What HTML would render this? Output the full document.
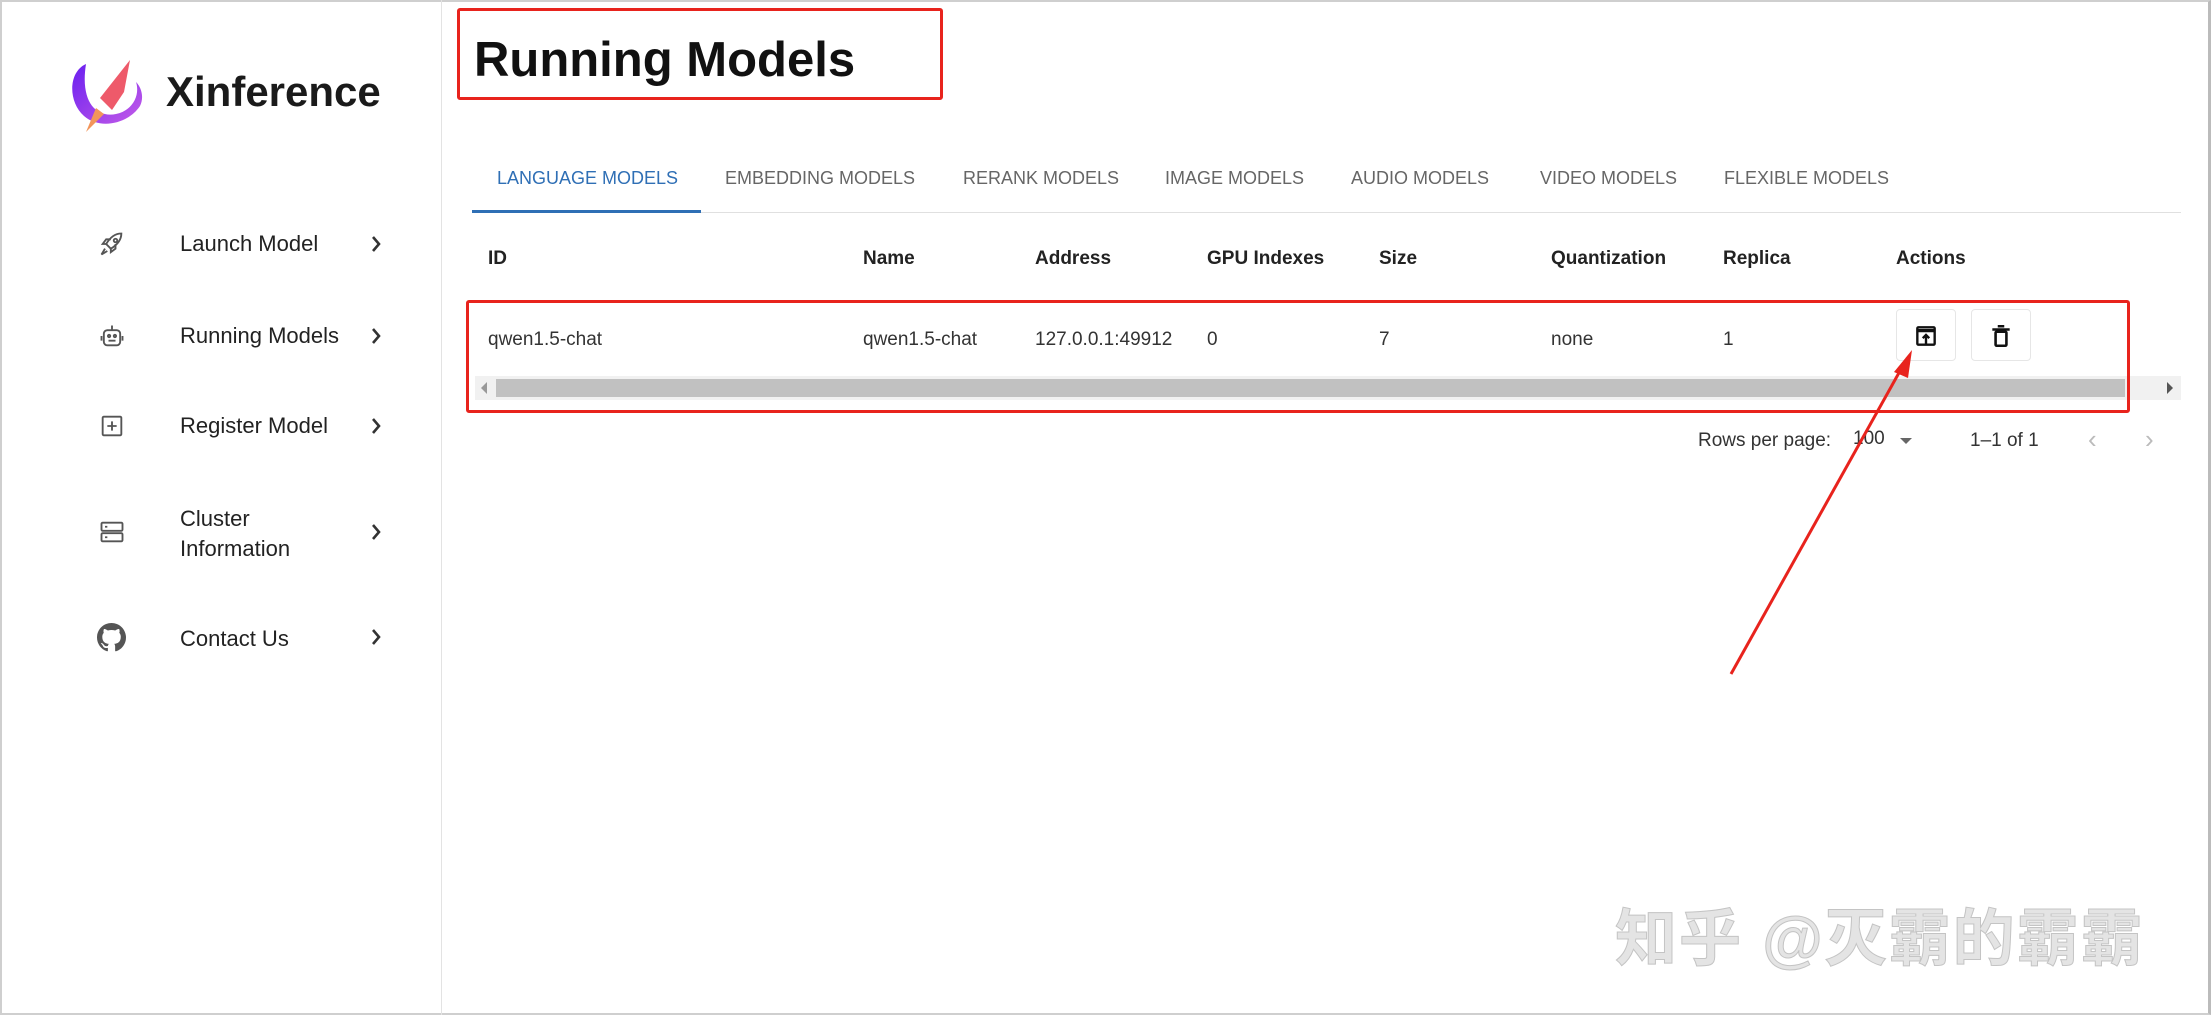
<!DOCTYPE html>
<html><head><meta charset="utf-8"><style>
*{margin:0;padding:0;box-sizing:border-box}
body{width:2211px;height:1015px;background:#fff;position:relative;overflow:hidden;font-family:"Liberation Sans","Noto Sans CJK SC",sans-serif;color:#222}
.a{position:absolute;white-space:nowrap}
.frame{position:absolute;left:0;top:0;width:2211px;height:1015px;border:2px solid #cfcfcf;border-right:3px solid #bbb}
.side{position:absolute;left:441px;top:0;width:1px;height:1015px;background:#e3e3e3}
.nav{font-size:22px;color:#222}
.tab{font-size:18px;color:#666;top:168px}
.th{font-size:19px;font-weight:bold;top:248px}
.td{font-size:19px;top:329px;color:#333}
.red{position:absolute;border:3px solid #e8231d;border-radius:3px}
.btn{position:absolute;top:309px;width:60px;height:52px;border:1px solid #e6e6e6;border-radius:4px;background:#fff}
</style></head><body>
<div class="frame"></div>
<div class="side"></div>

<svg class="a" style="left:66px;top:58px" width="84" height="74" viewBox="0 0 84 74">
<defs><linearGradient id="g" x1="0" y1="0" x2="1" y2="1"><stop offset="0" stop-color="#6a1ff0"/><stop offset="1" stop-color="#c45ce8"/></linearGradient></defs>
<path d="M20 6 C2 14 2 44 18 58 C34 72 62 66 74 48 C78 40 76 30 70 24 C74 36 68 52 50 56 C30 60 14 44 20 6 Z" fill="url(#g)"/>
<path d="M64 2 L58 34 L46 52 L34 40 Z" fill="#ee5a6a"/>
<path d="M30 50 L20 74 L38 56 Z" fill="#f2955a"/>
</svg>
<div class="a" style="left:166px;top:68px;font-size:42px;font-weight:bold;color:#1a1a1a">Xinference</div>

<svg class="a" style="left:98px;top:230px" width="28" height="28" viewBox="0 0 24 24" fill="none" stroke="#555" stroke-width="1.6"><path d="M20 3c-6 0-10 4-13 9l4 4c5-3 9-7 9-13z"/><circle cx="15" cy="9" r="1.5"/><path d="M7 12H4l3-4h4M11 16v3l4-3v-4M6 16l-3 5 5-3"/></svg>
<div class="a nav" style="left:180px;top:231px">Launch Model</div>

<svg class="a" style="left:98px;top:322px" width="28" height="28" viewBox="0 0 24 24" fill="none" stroke="#555" stroke-width="1.6"><rect x="5" y="7" width="14" height="13" rx="3"/><path d="M12 3v4M3 12v4M21 12v4"/><circle cx="9.5" cy="12" r="1"/><circle cx="14.5" cy="12" r="1"/><path d="M9 16h6"/></svg>
<div class="a nav" style="left:180px;top:323px">Running Models</div>

<svg class="a" style="left:98px;top:412px" width="28" height="28" viewBox="0 0 24 24" fill="none" stroke="#555" stroke-width="1.6"><rect x="4" y="4" width="16" height="16" rx="1"/><path d="M12 8v8M8 12h8"/></svg>
<div class="a nav" style="left:180px;top:413px">Register Model</div>

<svg class="a" style="left:98px;top:518px" width="28" height="28" viewBox="0 0 24 24" fill="none" stroke="#555" stroke-width="1.6"><rect x="3" y="4" width="18" height="7" rx="1"/><rect x="3" y="13" width="18" height="7" rx="1"/><path d="M6 7.5h2M6 16.5h2"/></svg>
<div class="a nav" style="left:180px;top:504px;line-height:30px">Cluster<br>Information</div>

<svg class="a" style="left:97px;top:623px" width="29" height="29" viewBox="0 0 16 16"><path fill="#555" d="M8 0C3.58 0 0 3.580 0 8c0 3.54 2.29 6.530 5.470 7.590.4.07.55-.17.55-.38 0-.19-.01-.82-.01-1.49-2.01.37-2.53-.49-2.69-.94-.09-.23-.48-.94-.82-1.13-.28-.15-.68-.52-.01-.53.63-.01 1.08.58 1.23.82.72 1.21 1.87.87 2.33.66.07-.52.28-.87.51-1.07-1.78-.2-3.64-.89-3.64-3.95 0-.87.31-1.59.82-2.15-.08-.2-.36-1.02.08-2.12 0 0 .67-.21 2.2.82.64-.18 1.32-.27 2-.27.68 0 1.36.09 2 .27 1.53-1.04 2.2-.82 2.2-.82.44 1.1.16 1.92.08 2.12.51.56.82 1.27.82 2.15 0 3.07-1.87 3.75-3.65 3.95.29.25.54.73.54 1.48 0 1.07-.01 1.930-.01 2.2 0 .21.15.46.55.38A8.013 8.013 0 0016 8c0-4.420-3.580-8-8-8z"/></svg>
<div class="a nav" style="left:180px;top:626px">Contact Us</div>

<svg class="a" style="left:368px;top:0" width="20" height="700" fill="none" stroke="#333" stroke-width="2.6">
<path d="M5 237l6 7-6 7"/><path d="M5 329l6 7-6 7"/><path d="M5 419l6 7-6 7"/><path d="M5 525l6 7-6 7"/><path d="M5 630l6 7-6 7"/></svg>

<div class="a" style="left:474px;top:32px;font-size:49px;font-weight:bold;color:#111">Running Models</div>
<div class="red" style="left:457px;top:8px;width:486px;height:92px"></div>

<div class="a" style="left:472px;top:212px;width:1709px;height:1px;background:#e0e0e0"></div>
<div class="a" style="left:472px;top:210px;width:229px;height:3px;background:#2f6fb5"></div>
<div class="a tab" style="left:497px;color:#2f6fb5">LANGUAGE MODELS</div>
<div class="a tab" style="left:725px">EMBEDDING MODELS</div>
<div class="a tab" style="left:963px">RERANK MODELS</div>
<div class="a tab" style="left:1165px">IMAGE MODELS</div>
<div class="a tab" style="left:1351px">AUDIO MODELS</div>
<div class="a tab" style="left:1540px">VIDEO MODELS</div>
<div class="a tab" style="left:1724px">FLEXIBLE MODELS</div>

<div class="a th" style="left:488px">ID</div>
<div class="a th" style="left:863px">Name</div>
<div class="a th" style="left:1035px">Address</div>
<div class="a th" style="left:1207px">GPU Indexes</div>
<div class="a th" style="left:1379px">Size</div>
<div class="a th" style="left:1551px">Quantization</div>
<div class="a th" style="left:1723px">Replica</div>
<div class="a th" style="left:1896px">Actions</div>

<div class="a td" style="left:488px">qwen1.5-chat</div>
<div class="a td" style="left:863px">qwen1.5-chat</div>
<div class="a td" style="left:1035px">127.0.0.1:49912</div>
<div class="a td" style="left:1207px">0</div>
<div class="a td" style="left:1379px">7</div>
<div class="a td" style="left:1551px">none</div>
<div class="a td" style="left:1723px">1</div>
<div class="btn" style="left:1896px"></div>
<svg class="a" style="left:1913px;top:323px" width="26" height="26" viewBox="0 0 24 24" fill="none" stroke="#111" stroke-width="2.2"><rect x="4" y="4" width="16" height="16" rx="1"/><path d="M4 7h16" stroke-width="3"/><path d="M12 19v-8M9 14l3-3 3 3"/></svg>
<div class="btn" style="left:1971px"></div>
<svg class="a" style="left:1988px;top:322px" width="26" height="28" viewBox="0 0 24 24" fill="none" stroke="#111" stroke-width="2.4"><path d="M9 3h6M4 6h16"/><rect x="7" y="8" width="10" height="13" rx="1"/></svg>

<div class="a" style="left:475px;top:376px;width:1706px;height:24px;background:#f1f1f1"></div>
<div class="a" style="left:496px;top:379px;width:1629px;height:18px;background:#c1c1c1"></div>
<div class="a" style="left:481px;top:382px;width:0;height:0;border-top:6px solid transparent;border-bottom:6px solid transparent;border-right:6px solid #999"></div>
<div class="a" style="left:2167px;top:382px;width:0;height:0;border-top:6px solid transparent;border-bottom:6px solid transparent;border-left:6px solid #555"></div>
<div class="red" style="left:466px;top:300px;width:1664px;height:113px"></div>

<div class="a" style="left:1698px;top:430px;font-size:19px;color:#333">Rows per page:</div>
<div class="a" style="left:1853px;top:428px;font-size:19px;color:#333">100</div>
<div class="a" style="left:1900px;top:438px;width:0;height:0;border-left:6px solid transparent;border-right:6px solid transparent;border-top:6px solid #666"></div>
<div class="a" style="left:1970px;top:430px;font-size:19px;color:#333">1–1 of 1</div>
<div class="a" style="left:2088px;top:424px;font-size:26px;color:#bbb">‹</div>
<div class="a" style="left:2145px;top:424px;font-size:26px;color:#bbb">›</div>

<svg class="a" style="left:0;top:0" width="2211" height="1015"><path d="M1731 674 L1905 362" stroke="#e8231d" stroke-width="3"/><path d="M1912 350 L1894 372 L1908 378 Z" fill="#e8231d"/></svg>

<div class="a" style="left:1615px;top:888px;font-size:62px;font-weight:bold;color:#e4e4e4;-webkit-text-stroke:1px #c4c4c4;letter-spacing:2px">知乎 @灭霸的霸霸</div>
</body></html>
